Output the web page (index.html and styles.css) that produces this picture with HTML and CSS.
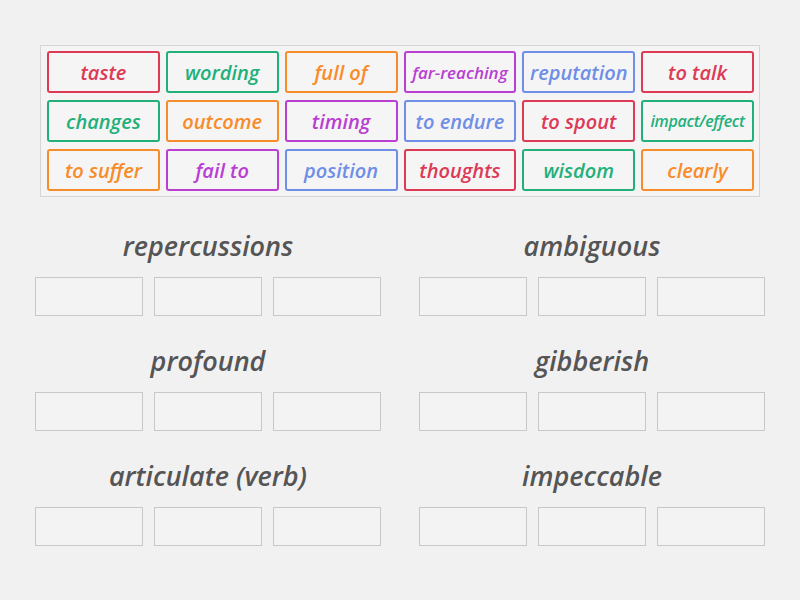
FILE: index.html
```html
<!DOCTYPE html>
<html>
<head>
<meta charset="utf-8">
<link rel="stylesheet" href="styles.css">
</head>
<body>
<div class="bank">
  <div class="tile red">taste</div>
  <div class="tile green">wording</div>
  <div class="tile orange">full of</div>
  <div class="tile purple small">far-reaching</div>
  <div class="tile blue">reputation</div>
  <div class="tile red">to talk</div>
  <div class="tile green">changes</div>
  <div class="tile orange">outcome</div>
  <div class="tile purple">timing</div>
  <div class="tile blue">to endure</div>
  <div class="tile red">to spout</div>
  <div class="tile green smaller">impact/effect</div>
  <div class="tile orange">to suffer</div>
  <div class="tile purple">fail to</div>
  <div class="tile blue">position</div>
  <div class="tile red">thoughts</div>
  <div class="tile green">wisdom</div>
  <div class="tile orange">clearly</div>
</div>
<div class="targets">
  <div class="group"><div class="head">repercussions</div><div class="slots"><div class="slot"></div><div class="slot"></div><div class="slot"></div></div></div>
  <div class="group"><div class="head">ambiguous</div><div class="slots"><div class="slot"></div><div class="slot"></div><div class="slot"></div></div></div>
  <div class="group"><div class="head">profound</div><div class="slots"><div class="slot"></div><div class="slot"></div><div class="slot"></div></div></div>
  <div class="group"><div class="head">gibberish</div><div class="slots"><div class="slot"></div><div class="slot"></div><div class="slot"></div></div></div>
  <div class="group"><div class="head">articulate (verb)</div><div class="slots"><div class="slot"></div><div class="slot"></div><div class="slot"></div></div></div>
  <div class="group"><div class="head">impeccable</div><div class="slots"><div class="slot"></div><div class="slot"></div><div class="slot"></div></div></div>
</div>
</body>
</html>
```
FILE: styles.css
```css
html, body {
  margin: 0;
  padding: 0;
  background: #f2f1f2;
  font-family: "Open Sans", "DejaVu Sans", sans-serif;
}
body {
  width: 800px;
  height: 600px;
  overflow: hidden;
}
.bank {
  margin: 45px 0 0 40px;
  width: 720px;
  box-sizing: border-box;
  border: 1px solid #d6d5d6;
  background: #f5f4f5;
  padding: 5px 5px 5px 6px;
  display: grid;
  grid-template-columns: repeat(6, 1fr);
  grid-auto-rows: 42px;
  column-gap: 6px;
  row-gap: 7px;
}
.tile {
  box-sizing: border-box;
  border: 2px solid;
  border-radius: 3px;
  background: #f6f5f6;
  display: flex;
  align-items: center;
  justify-content: center;
  font-style: italic;
  font-weight: 600;
  font-size: 20px;
  white-space: nowrap;
}
.tile.small { font-size: 17px; }
.tile.smaller { font-size: 16px; letter-spacing: -0.3px; }
.red { color: #dc3a55; border-color: #dc3a55; }
.green { color: #22b07a; border-color: #22b07a; }
.orange { color: #f78c2a; border-color: #f78c2a; }
.purple { color: #b83fd2; border-color: #b83fd2; }
.blue { color: #6f8ee6; border-color: #6f8ee6; }
.targets {
  margin: 29px 0 0 35px;
  width: 730px;
  display: grid;
  grid-template-columns: 346px 346px;
  column-gap: 38px;
  row-gap: 25px;
}
.head {
  height: 40px;
  line-height: 40px;
  text-align: center;
  font-style: italic;
  font-weight: 600;
  font-size: 27px;
  color: #555555;
  margin-bottom: 11px;
}
.slots {
  display: flex;
  gap: 11px;
}
.slot {
  width: 108px;
  height: 39px;
  box-sizing: border-box;
  border: 1px solid #c9c8c9;
  background: #f4f3f4;
}
```
